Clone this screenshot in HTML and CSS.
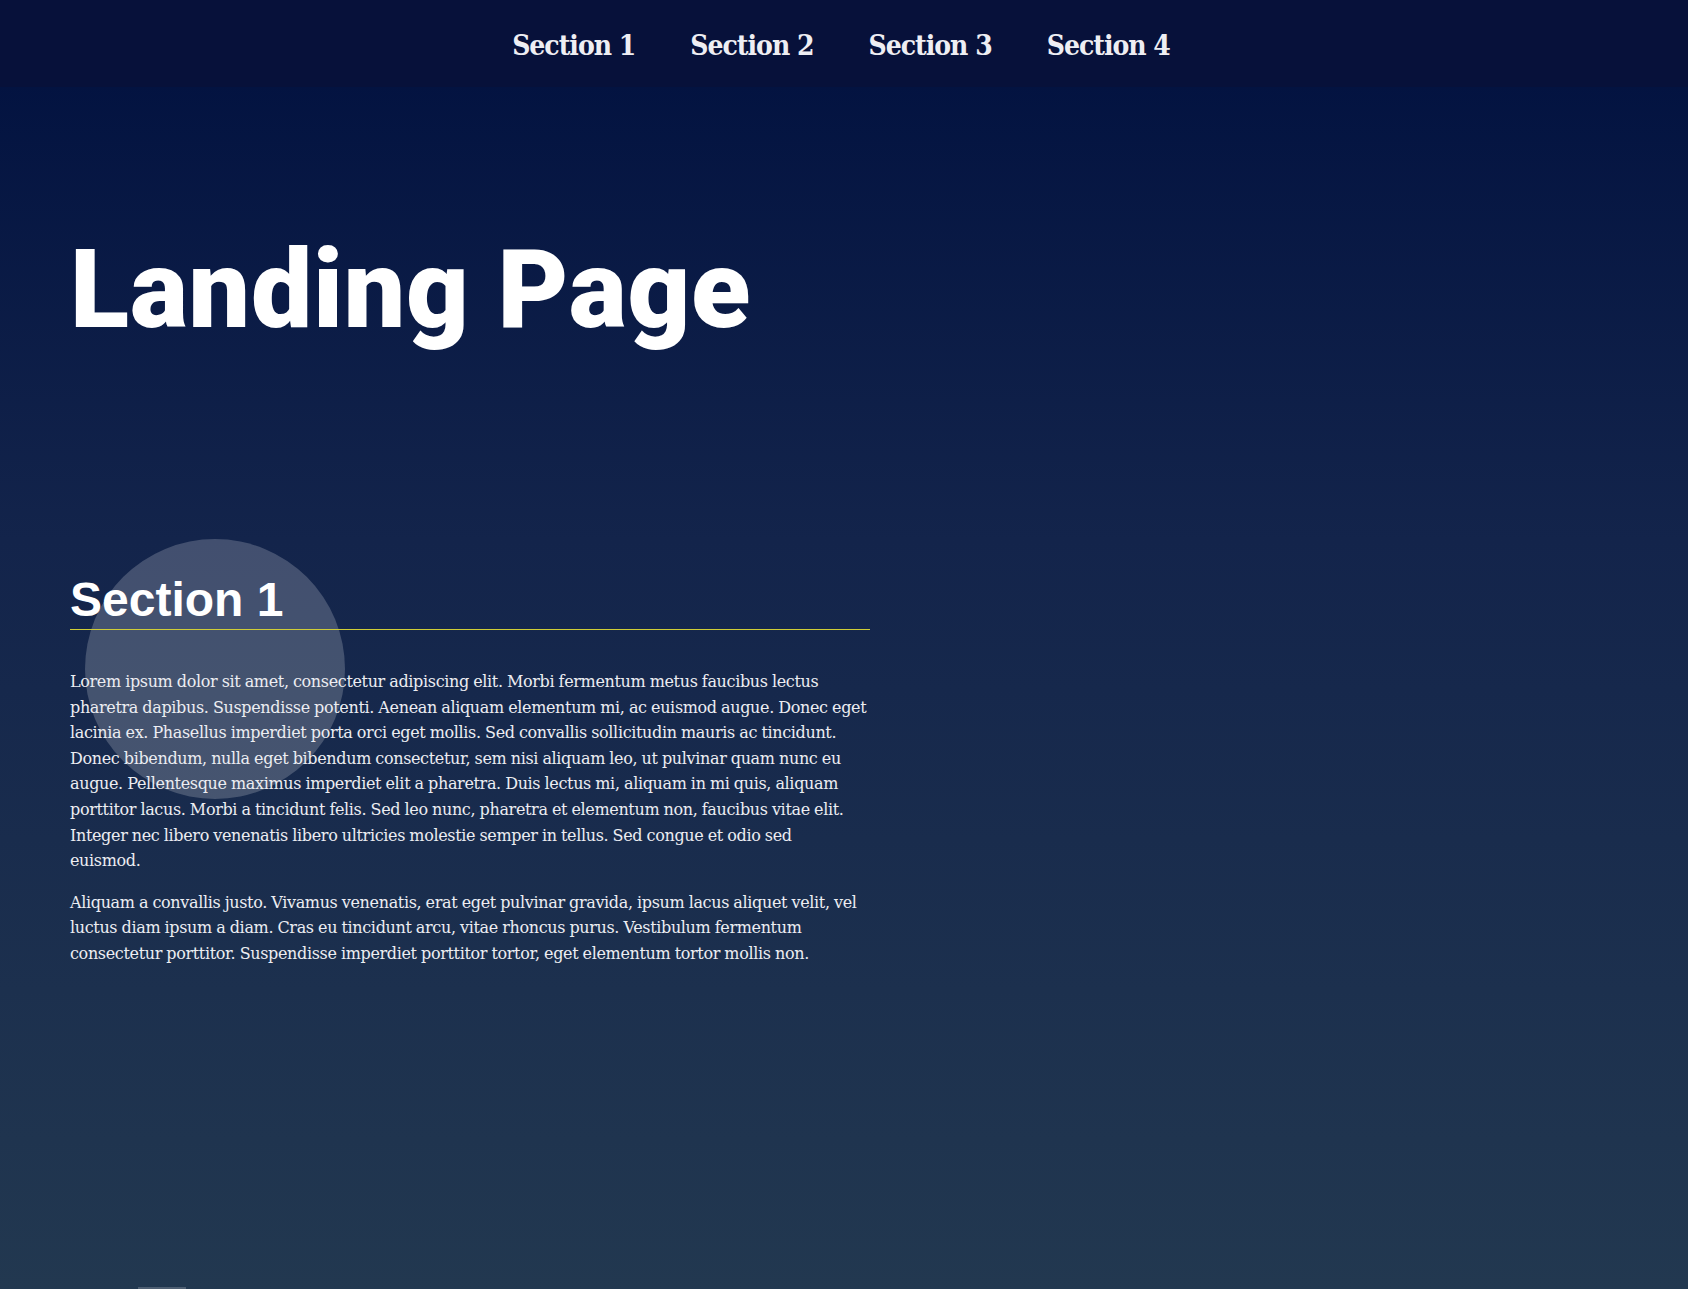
FILE: index.html
```html
<!DOCTYPE html>
<html lang="en">
<head>
<meta charset="utf-8">
<title>Landing Page</title>
<link rel="stylesheet" href="styles.css">
</head>
<body>
<nav class="topnav">
  <a class="navlink" href="#s1">Section 1</a>
  <a class="navlink" href="#s2">Section 2</a>
  <a class="navlink" href="#s3">Section 3</a>
  <a class="navlink" href="#s4">Section 4</a>
</nav>
<main class="main">
  <h1 class="title">Landing Page</h1>
  <section class="section" id="s1">
    <div class="circle"></div>
    <h2 class="section-title">Section 1</h2>
    <p class="text">Lorem ipsum dolor sit amet, consectetur adipiscing elit. Morbi fermentum metus faucibus lectus pharetra dapibus. Suspendisse potenti. Aenean aliquam elementum mi, ac euismod augue. Donec eget lacinia ex. Phasellus imperdiet porta orci eget mollis. Sed convallis sollicitudin mauris ac tincidunt. Donec bibendum, nulla eget bibendum consectetur, sem nisi aliquam leo, ut pulvinar quam nunc eu augue. Pellentesque maximus imperdiet elit a pharetra. Duis lectus mi, aliquam in mi quis, aliquam porttitor lacus. Morbi a tincidunt felis. Sed leo nunc, pharetra et elementum non, faucibus vitae elit. Integer nec libero venenatis libero ultricies molestie semper in tellus. Sed congue et odio sed<br>euismod.</p>
    <p class="text">Aliquam a convallis justo. Vivamus venenatis, erat eget pulvinar gravida, ipsum lacus aliquet velit, vel luctus diam ipsum a diam. Cras eu tincidunt arcu, vitae rhoncus purus. Vestibulum fermentum consectetur porttitor. Suspendisse imperdiet porttitor tortor, eget elementum tortor mollis non.</p>
  </section>
  <div class="next-block"></div>
</main>
</body>
</html>
```

FILE: styles.css
```css
html {
  background: #243d5b;
}
body {
  margin: 0;
  min-height: 1289px;
  background: linear-gradient(180deg, #00103f 0px, #13244b 540px, #223850 1289px);
  overflow: hidden;
}
.topnav {
  box-sizing: border-box;
  height: 87px;
  padding-top: 3px;
  padding-right: 6px;
  background: #07113a;
  display: flex;
  justify-content: center;
  align-items: center;
  gap: 55px;
}
.navlink {
  font-family: "DejaVu Serif Condensed", "DejaVu Serif", serif;
  font-stretch: condensed;
  font-weight: bold;
  font-size: 28px;
  letter-spacing: -1px;
  color: #eeeef3;
  text-decoration: none;
}
.main {
  padding: 0 70px;
  width: 800px;
}
.title {
  margin: 149px 0 0;
  font-family: Roboto, Lato, "Liberation Sans", sans-serif;
  font-weight: 900;
  font-size: 109px;
  line-height: 1;
  letter-spacing: 0.8px;
  color: #ffffff;
}
.section {
  position: relative;
  margin-top: 231px;
  min-height: 711px;
}
.circle {
  position: absolute;
  left: 15px;
  top: -37px;
  width: 260px;
  height: 260px;
  border-radius: 50%;
  background: rgba(255, 255, 255, 0.2);
}
.section-title {
  position: relative;
  margin: 0;
  padding-bottom: 5px;
  border-bottom: 1px solid #cfcc36;
  font-family: "Liberation Sans", Arial, sans-serif;
  font-weight: bold;
  font-size: 48px;
  line-height: 1;
  color: #ffffff;
}
.text {
  position: relative;
  margin: 16px 0 0;
  font-family: "DejaVu Serif", serif;
  font-size: 16px;
  line-height: 25.6px;
  letter-spacing: -0.35px;
  word-spacing: -0.4px;
  color: #ecedf2;
}
.section-title + .text {
  margin-top: 39px;
}
.next-block {
  width: 48px;
  height: 10px;
  margin: 0 0 0 68px;
  background: rgba(255, 255, 255, 0.2);
}
```
